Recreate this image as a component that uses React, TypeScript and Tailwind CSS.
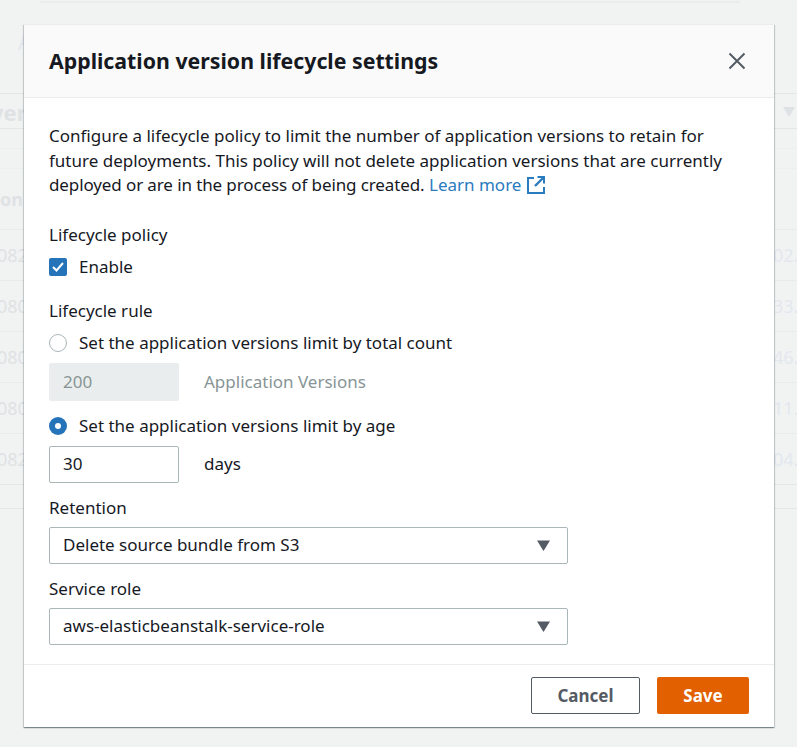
import React from 'react';

const font = "font-['Noto_Sans',sans-serif]";

const rows = [
  { left: '082', right: '02.' },
  { left: '080', right: '33.' },
  { left: '080', right: '46.' },
  { left: '080', right: '11.' },
  { left: '082', right: '04.' }
];

const BackgroundPage: React.FC = () => (
  <div className="h-[747px] overflow-hidden bg-[#f1f3f3] text-[#dfe2e4]">
    <div className="h-[93px] pt-[1px]">
      <div className="ml-10 mr-[57px] h-[2px] bg-[#e9ebed]"></div>
      <div className="pl-[18px] pt-[25px] text-[21px] leading-[28px] text-[#e4e8ee]">A</div>
    </div>
    <div className="h-[36px] pt-[2px] border-y border-[#e3e6e7] flex items-center justify-between text-[22px] font-bold">
      <span className="-ml-[9px] whitespace-nowrap">ver</span>
      <span className="mr-[2px] w-0 h-0 border-x-[6px] border-x-transparent border-t-[10px] border-t-[#dfe2e4]"></span>
    </div>
    <div className="h-[19px]"></div>
    <div className="h-[20px] border-t border-[#eceeef]"></div>
    <div className="h-[61px] border-t border-[#eceeef] flex items-center text-[18px] font-bold">on</div>
    {rows.map(r => (
      <div key={r.left + r.right} className="h-[51px] border-t border-[#e8ebec] flex items-center justify-between text-[18px]">
        <span className="-ml-[3px]">{r.left}</span>
        <span className="w-[24px] shrink-0 whitespace-nowrap text-[#e3e8ef]">{r.right}</span>
      </div>
    ))}
    <div className="h-[25px] border-y border-[#e3e6e7]"></div>
  </div>
);

const SelectBox: React.FC<{ value: string }> = ({ value }) => (
  <div className="w-[519px] h-[37px] mt-[7px] flex items-center justify-between pl-[13px] pr-[17px] rounded-[2px] border border-[#aab7b8]">
    <span>{value}</span>
    <svg width="13" height="11" viewBox="0 0 13 11"><path d="M0 0.5 H13 L6.5 11 Z" fill="#545b64" /></svg>
  </div>
);

const App: React.FC = () => (
  <div className={`relative w-[797px] h-[747px] overflow-hidden ${font}`}>
    <BackgroundPage />

    {/* modal */}
    <div className="absolute left-[24px] top-[24px] w-[750px] h-[703px] bg-white border-t border-[#eaeded] shadow-[0_1px_1px_0_rgba(0,28,36,0.3),1px_1px_1px_0_rgba(0,28,36,0.15),-1px_1px_1px_0_rgba(0,28,36,0.15)] flex flex-col">
      <div className="h-[73px] shrink-0 bg-[#fafafa] border-b border-[#eaeded] flex items-center justify-between pl-[25px] pr-[28px]">
        <h2 className="text-[21.3px] font-bold text-[#16191f]">Application version lifecycle settings</h2>
        <svg width="18" height="18" viewBox="0 0 18 18" fill="none" stroke="#545b64" strokeWidth="2">
          <path d="M1.5 1.5 L16.5 16.5 M16.5 1.5 L1.5 16.5" />
        </svg>
      </div>

      <div className="flex-1 pl-[25px] pt-[26px] text-[#16191f] text-[17px]">
        <p className="leading-[24.5px] w-[690px]">
          Configure a lifecycle policy to limit the number of application versions to retain for future deployments. This policy will not delete application versions that are currently{' '}
          <span className="tracking-[-0.11px]">deployed or are in the process of being created.</span>{' '}
          <span className="text-[#2b7bbf] whitespace-nowrap">
            Learn more
            <svg className="inline-block ml-[6px] -mt-[3px]" width="18" height="18" viewBox="0 0 18 18" fill="none" stroke="#2b7bbf" strokeWidth="2">
              <path d="M7 2 H1 V17 H17 V11" />
              <path d="M10.5 1 H17 V7.5" />
              <path d="M16.5 1.5 L8 10" strokeWidth="2.4" />
            </svg>
          </span>
        </p>

        <div className="mt-[25px] leading-[24px]">Lifecycle policy</div>
        <div className="mt-[11px] flex items-center h-[18px]">
          <span className="w-[18px] h-[18px] rounded-[2px] bg-[#2574ba] flex items-center justify-center">
            <svg width="12" height="10" viewBox="0 0 12 10" fill="none" stroke="#fff" strokeWidth="2"><path d="M1 5 L4.5 8.5 L11 1" /></svg>
          </span>
          <span className="ml-[12px]">Enable</span>
        </div>

        <div className="mt-[23px] leading-[24px]">Lifecycle rule</div>
        <div className="mt-[11px] flex items-center h-[18px]">
          <span className="w-[18px] h-[18px] rounded-full border-[1.5px] border-[#aab7b8]"></span>
          <span className="ml-[12px]">Set the application versions limit by total count</span>
        </div>
        <div className="mt-[11px] flex items-center h-[38px]">
          <div className="w-[130px] h-[38px] rounded-[2px] bg-[#eaeded] text-[#879596] flex items-center pl-[14px]">200</div>
          <span className="ml-[25px] text-[#879596]">Application Versions</span>
        </div>
        <div className="mt-[16px] flex items-center h-[18px]">
          <span className="w-[18px] h-[18px] rounded-full bg-[#2574ba] flex items-center justify-center">
            <span className="w-[6px] h-[6px] rounded-full bg-white"></span>
          </span>
          <span className="ml-[12px]">Set the application versions limit by age</span>
        </div>
        <div className="mt-[11px] flex items-center h-[37px]">
          <div className="w-[130px] h-[37px] rounded-[2px] border border-[#aab7b8] flex items-center pl-[13px]">30</div>
          <span className="ml-[25px]">days</span>
        </div>

        <div className="mt-[13px] leading-[24px]">Retention</div>
        <SelectBox value="Delete source bundle from S3" />
        <div className="mt-[13px] leading-[24px]">Service role</div>
        <SelectBox value="aws-elasticbeanstalk-service-role" />
      </div>

      <div className="h-[63px] shrink-0 border-t border-[#eaeded] flex items-start justify-end gap-[17px] pt-[12px] pr-[25px]">
        <button className="w-[109px] h-[37px] rounded-[2px] border border-[#545b64] bg-white text-[#545b64] text-[17px] font-bold">Cancel</button>
        <button className="w-[92px] h-[37px] rounded-[2px] bg-[#e36000] text-white text-[17px] font-bold">Save</button>
      </div>
    </div>
  </div>
);

export default App;
